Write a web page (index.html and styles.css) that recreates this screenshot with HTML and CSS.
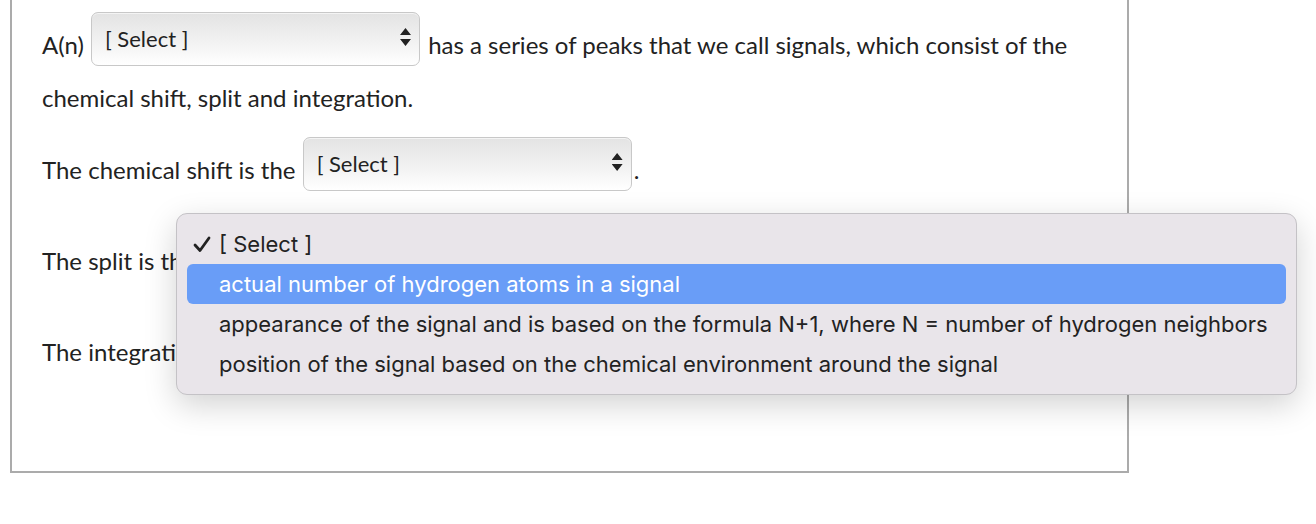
FILE: index.html
```html
<!DOCTYPE html>
<html lang="en">
<head>
  <meta charset="UTF-8" />
  <title>Quiz Question</title>
  <meta name="viewport" content="width=device-width, initial-scale=1.0">
  <link rel="stylesheet" href="styles.css">
</head>
<body>
  <div class="question">
    <p>A(n) <span class="select">[ Select ]</span> has a series of peaks that we call signals, which consist of the chemical shift, split and integration.</p>
    <p>The chemical shift is the <span class="select">[ Select ]</span>.</p>
    <p>The split is the <span class="select">[ Select ]</span>.</p>
    <p>The integration is the <span class="select">[ Select ]</span>.</p>

    <ul class="menu">
      <li class="checked">
        <svg class="check" width="18" height="17" viewBox="0 0 18 17"><polyline points="2,9 7,14.5 16,2" fill="none" stroke="#222" stroke-width="2.8" stroke-linecap="round" stroke-linejoin="round"/></svg>
        [ Select ]
      </li>
      <li class="active">actual number of hydrogen atoms in a signal</li>
      <li>appearance of the signal and is based on the formula N+1, where N = number of hydrogen neighbors</li>
      <li>position of the signal based on the chemical environment around the signal</li>
    </ul>
  </div>
</body>
</html>
```

FILE: styles.css
```css
* { box-sizing: border-box; }

body {
  margin: 0;
  background: #fff;
  font-family: Lato, 'Open Sans', sans-serif;
  color: #222;
}

.question {
  position: relative;
  width: 1119px;
  margin: -20px 0 0 10px;
  padding: 30px 30px 61px;
  border: 2px solid #ababab;
}

.question p {
  margin: 0 0 22px;
  font-size: 24px;
  line-height: 34px;
  color: #222;
}

.select {
  display: inline-block;
  position: relative;
  width: 329px;
  height: 54px;
  margin: 0 2px 15px 1px;
  padding: 0 36px 0 13px;
  vertical-align: 7px;
  font-size: 22px;
  line-height: 52px;
  color: #222;
  border: 1px solid #c8c8c8;
  border-radius: 7px;
  background: linear-gradient(#e3e3e3, #f3f3f3 60%, #fff);
  box-shadow: inset 0 1px 0 rgba(255, 255, 255, 0.6);
}

/* up/down arrows */
.select::after {
  content: "";
  position: absolute;
  right: 8px;
  top: 15px;
  width: 11px;
  height: 18px;
  background: #222;
  clip-path: path('M5.5 0 L11 7 L0 7 Z M0 11 L11 11 L5.5 18 Z');
}

.menu {
  position: absolute;
  left: 164px;
  top: 231px;
  width: 1121px;
  margin: 0;
  padding: 10px;
  list-style: none;
  font-family: Inter, 'Noto Sans', sans-serif;
  font-size: 22px;
  color: #222;
  background: #e9e5ea;
  border: 1px solid #c4c2c6;
  border-radius: 11px;
  box-shadow: 0 10px 32px rgba(0, 0, 0, 0.18);
}

.menu li {
  position: relative;
  height: 40px;
  padding-left: 32px;
  line-height: 41px;
  border-radius: 6px;
  white-space: nowrap;
}

.menu li.active {
  background: #699df7;
  color: #fff;
}

.check {
  position: absolute;
  left: 6px;
  top: 12px;
}
```
